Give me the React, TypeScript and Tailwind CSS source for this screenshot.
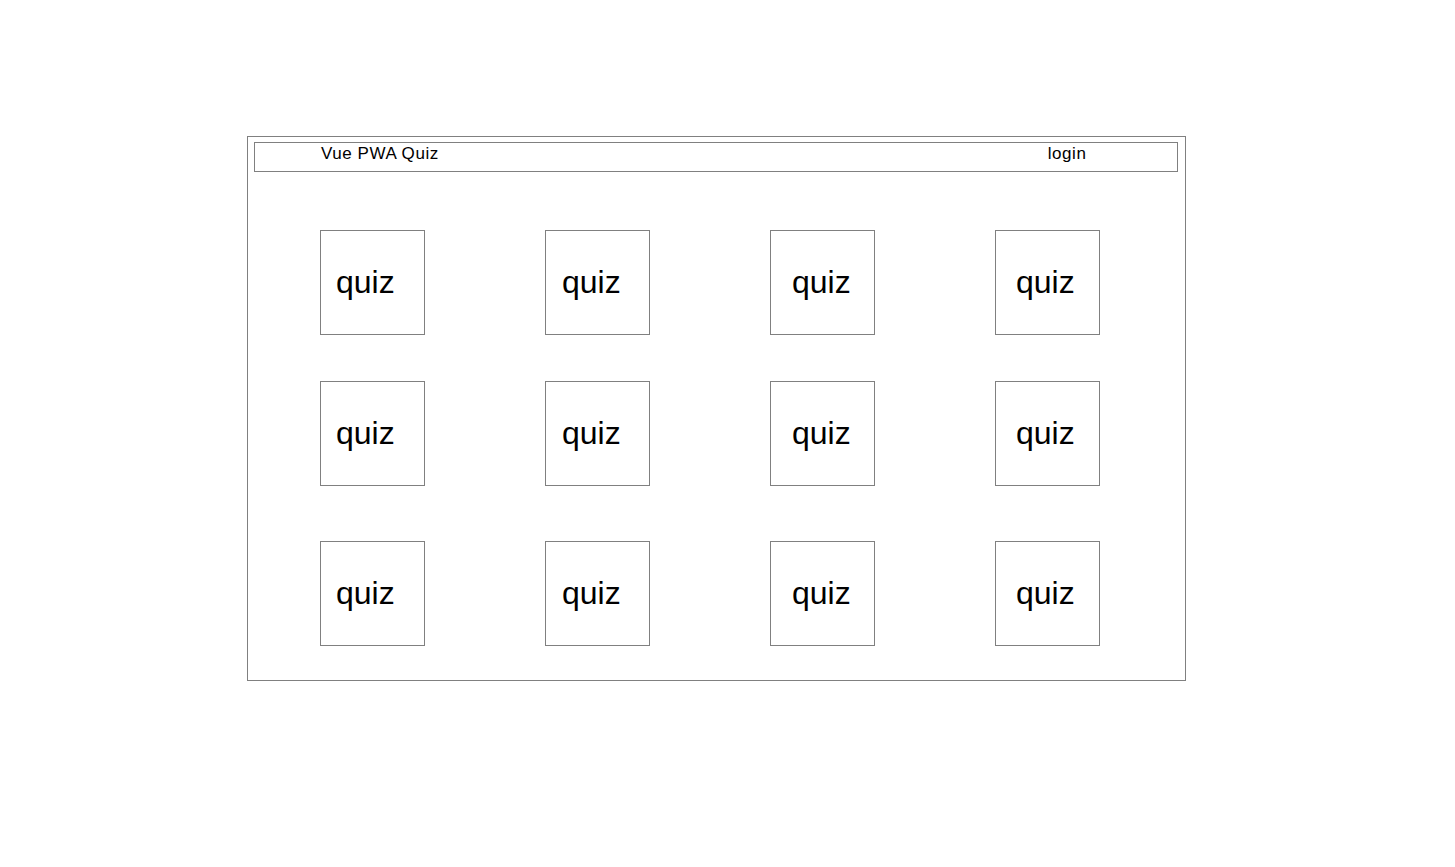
import React from "react";

const pads = ["pl-[15px]", "pl-[16px]", "pl-[21px]", "pl-[20px]"];

function Card({ i }: { i: number }) {
  return (
    <div
      className={`w-[105px] h-[105px] border border-[#808080] flex items-center pb-[2px] ${pads[i]} text-[32px] text-black`}
    >
      quiz
    </div>
  );
}

function Row({ className }: { className: string }) {
  return (
    <div className={`flex gap-[120px] ml-[72px] ${className}`}>
      {[0, 1, 2, 3].map((i) => (
        <Card key={i} i={i} />
      ))}
    </div>
  );
}

export default function App() {
  return (
    <div
      className="w-[1455px] h-[867px] bg-white pt-[136px] pl-[247px]"
      style={{ fontFamily: '"Liberation Sans", Arial, sans-serif' }}
    >
      <div className="w-[939px] h-[545px] border border-[#808080]">
        <div className="mt-[5px] ml-[6px] w-[924px] h-[30px] border border-[#808080] flex items-start text-[17px] tracking-[0.55px] text-black leading-[20px] pt-[1px]">
          <span className="ml-[66px]">Vue PWA Quiz</span>
          <span className="ml-[609px]">login</span>
        </div>
        <Row className="mt-[58px]" />
        <Row className="mt-[46px]" />
        <Row className="mt-[55px]" />
      </div>
    </div>
  );
}
